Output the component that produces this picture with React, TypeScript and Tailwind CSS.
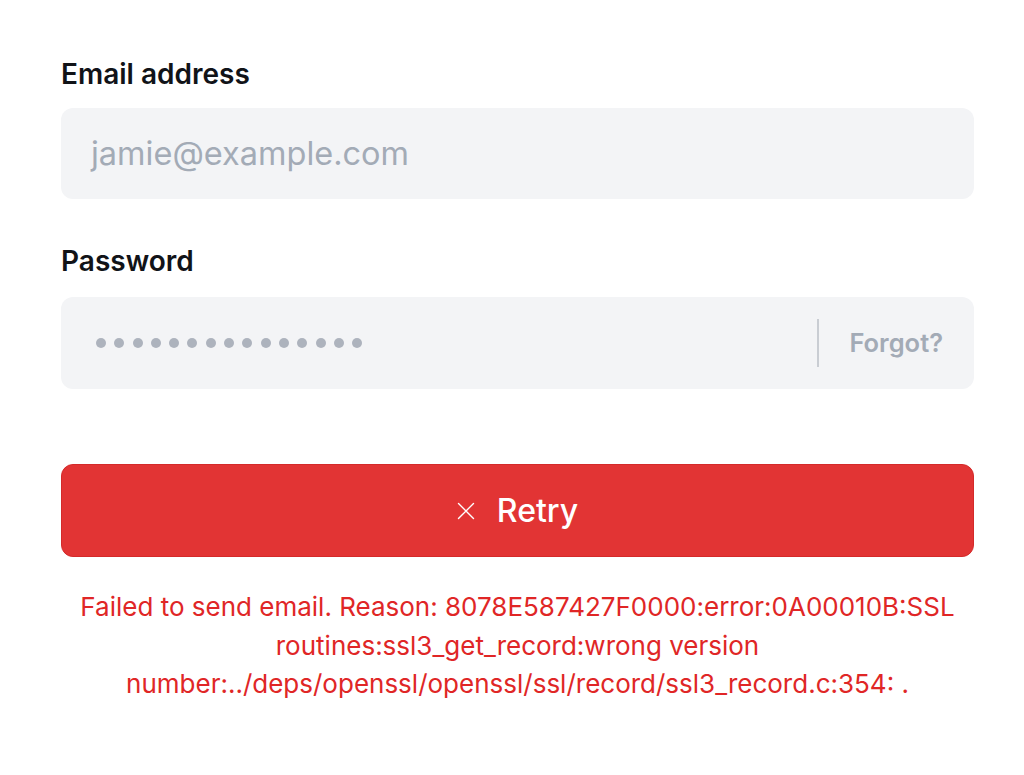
export default function App() {
  const dots = Array.from({ length: 15 });
  return (
    <div className="min-h-screen bg-white font-['Inter',sans-serif]">
      <div className="pl-[61px] pr-[50px] pt-[56px]">
        {/* Email */}
        <label className="block text-[28px] leading-[36px] font-semibold text-[#111318]">
          Email address
        </label>
        <div className="mt-[16px] flex h-[91px] items-center rounded-[12px] bg-[#f3f4f6] px-[30px] pt-[2px]">
          <span className="text-[32.5px] text-[#a3abb6]">jamie@example.com</span>
        </div>

        {/* Password */}
        <label className="mt-[44px] block text-[28px] leading-[36px] font-semibold text-[#111318]">
          Password
        </label>
        <div className="mt-[18px] flex h-[92px] items-center rounded-[12px] bg-[#f3f4f6] pl-[35px] pr-[31px]">
          <div className="flex flex-1 items-center gap-[8.3px]">
            {dots.map((_, i) => (
              <span key={i} className="h-[10px] w-[10px] rounded-full bg-[#adb3bd]" />
            ))}
          </div>
          <span className="ml-[-1px] h-[48px] w-[2px] bg-[#c9cdd3]" />
          <span className="ml-[30px] text-[25.5px] font-semibold text-[#a3abb6]">Forgot?</span>
        </div>

        {/* Retry button */}
        <button className="mt-[75px] flex h-[93px] w-full items-center justify-center gap-[22px] rounded-[12px] border border-[#d42a2a] bg-[#e23434] text-white">
          <svg width="18" height="18" viewBox="0 0 18 18" fill="none" stroke="currentColor" strokeWidth="1.4" strokeLinecap="round">
            <path d="M1.5 1.5l15 15M16.5 1.5l-15 15" />
          </svg>
          <span className="text-[32px] font-medium">Retry</span>
        </button>

        {/* Error */}
        <p className="mx-auto mt-[31px] max-w-[900px] text-center text-[26px] leading-[38.5px] text-[#e02626]">
          Failed to send email. Reason: 8078E587427F0000:error:0A00010B:SSL
          routines:ssl3_get_record:wrong version
          number:../deps/openssl/openssl/ssl/record/ssl3_record.c:354: .
        </p>
      </div>
    </div>
  );
}
